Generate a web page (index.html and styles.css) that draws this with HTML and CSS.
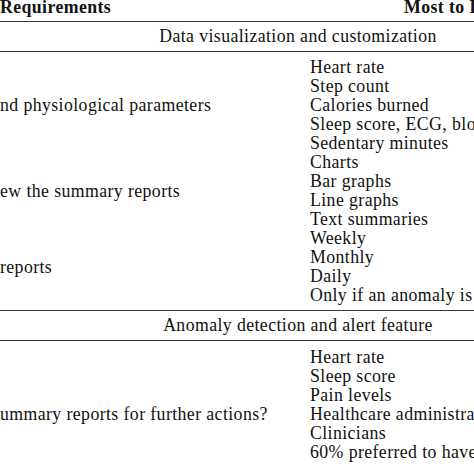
FILE: index.html
```html
<!DOCTYPE html>
<html>
<head>
<meta charset="utf-8">
<link rel="stylesheet" href="styles.css">
</head>
<body>
<div class="table">
  <div class="head">
    <div class="q">Requirements</div>
    <div class="a head-a">Most to Least Preferred</div>
  </div>
  <div class="section">Data visualization and customization</div>
  <div class="group group-top">
    <div class="row">
      <div class="q">nd physiological parameters</div>
      <div class="a">
        <div>Heart rate</div>
        <div>Step count</div>
        <div>Calories burned</div>
        <div>Sleep score, ECG, blood oxygen</div>
        <div>Sedentary minutes</div>
      </div>
    </div>
    <div class="row">
      <div class="q">ew the summary reports</div>
      <div class="a">
        <div>Charts</div>
        <div>Bar graphs</div>
        <div>Line graphs</div>
        <div>Text summaries</div>
      </div>
    </div>
    <div class="row">
      <div class="q">reports</div>
      <div class="a">
        <div>Weekly</div>
        <div>Monthly</div>
        <div>Daily</div>
        <div>Only if an anomaly is detected</div>
      </div>
    </div>
  </div>
  <div class="section">Anomaly detection and alert feature</div>
  <div class="group group-bottom">
    <div class="row">
      <div class="q"></div>
      <div class="a">
        <div>Heart rate</div>
        <div>Sleep score</div>
        <div>Pain levels</div>
      </div>
    </div>
    <div class="row row-start">
      <div class="q">ummary reports for further actions?</div>
      <div class="a">
        <div>Healthcare administrators</div>
        <div>Clinicians</div>
        <div>60% preferred to have both</div>
      </div>
    </div>
  </div>
</div>
</body>
</html>
```

FILE: styles.css
```css
html, body {
  margin: 0;
  padding: 0;
  background: #ffffff;
}
body {
  width: 474px;
  height: 474px;
  overflow: hidden;
}
.table {
  width: 596px;
  margin-top: -2px;
  font-family: "Liberation Serif", "Times New Roman", serif;
  font-size: 17.8px;
  line-height: 19px;
  letter-spacing: 0.4px;
  color: #111111;
  white-space: nowrap;
}
.head {
  display: grid;
  grid-template-columns: 310px 1fr;
  font-weight: bold;
  padding-bottom: 4px;
  border-bottom: 1px solid #333;
}
.head-a {
  padding-left: 94px;
}
.section {
  text-align: center;
  padding: 5px 0 5px;
  border-bottom: 1px solid #333;
}
.group {
  border-bottom: 1px solid #333;
}
.group-top {
  padding: 6px 0 5px;
}
.group-bottom {
  padding: 7px 0 5px;
  border-bottom: none;
}
.row {
  display: grid;
  grid-template-columns: 310px 1fr;
  align-items: center;
}
.row-start {
  align-items: start;
}
.q {
  overflow: hidden;
}
.a {
  overflow: hidden;
}
```
